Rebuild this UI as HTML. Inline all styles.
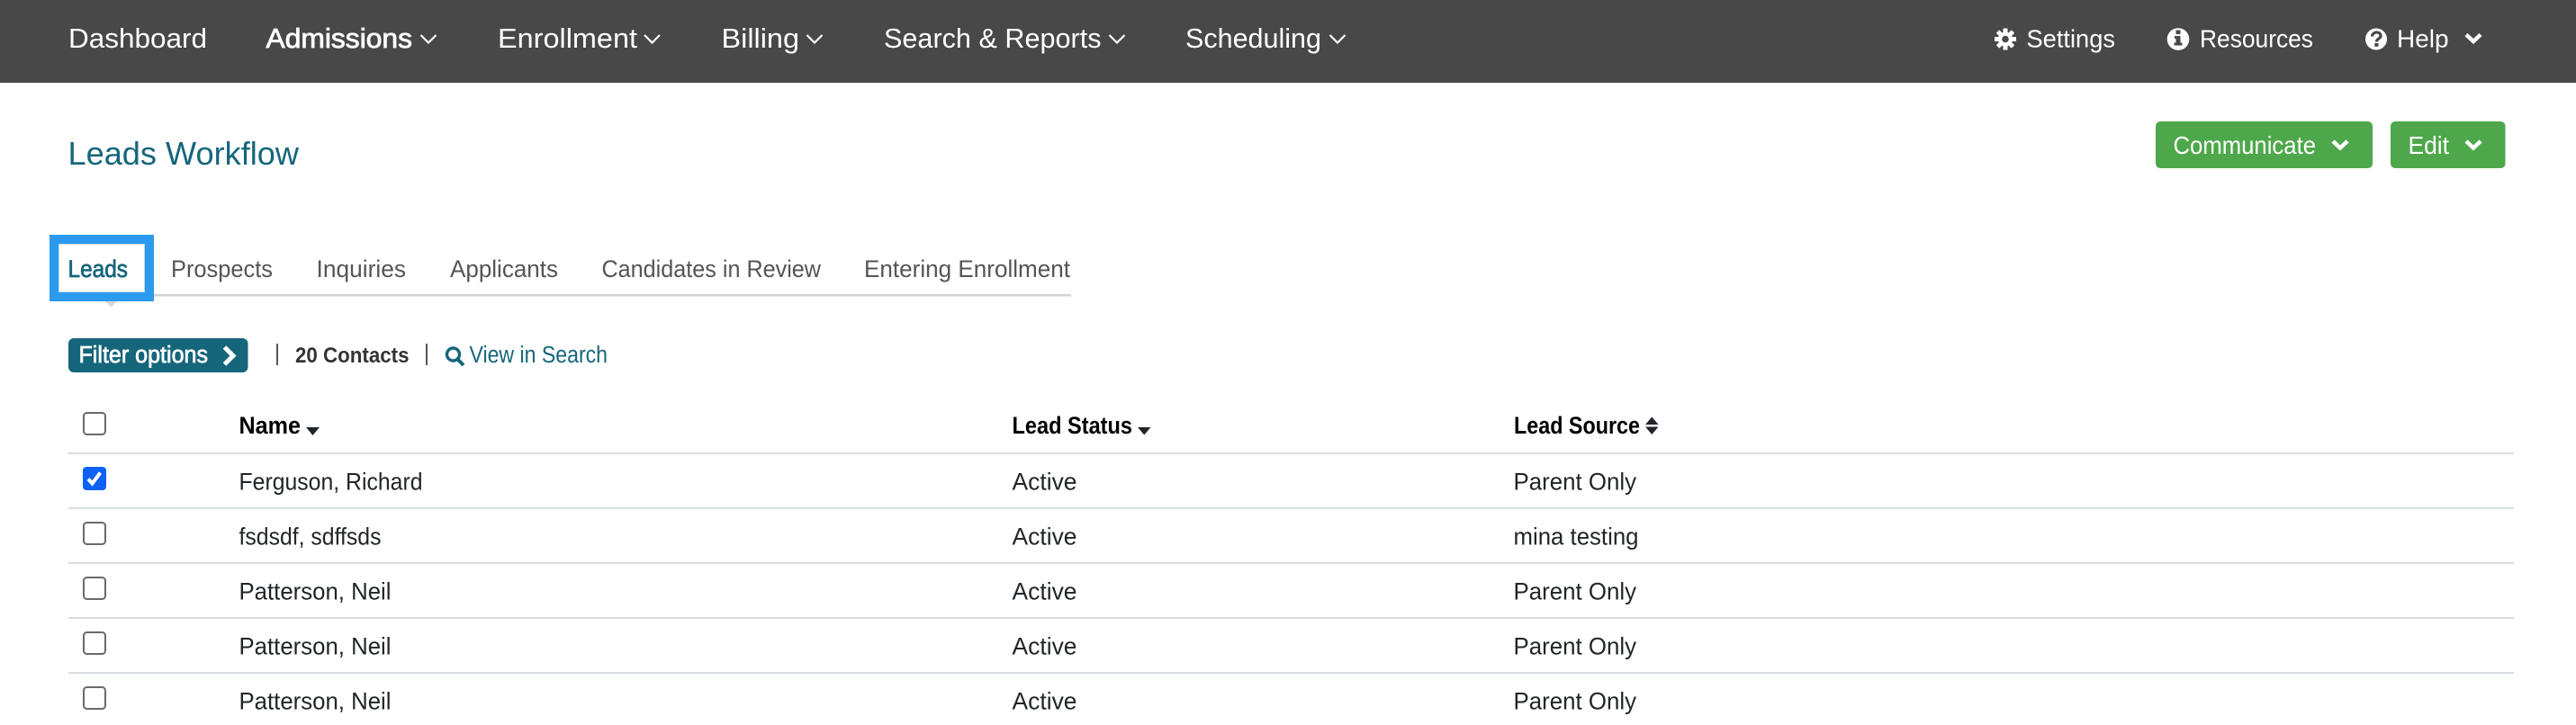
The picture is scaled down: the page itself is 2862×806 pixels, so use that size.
<!DOCTYPE html>
<html lang="en"><head><meta charset="utf-8"><title>Leads Workflow</title>
<style>
html,body{margin:0;padding:0;background:#fff;width:2862px;height:806px;overflow:hidden}
svg{display:block}
text{font-family:"Liberation Sans",sans-serif}
.n{fill:#fff;font-size:31px}
.r{fill:#fff;font-size:27.500px}
.t{fill:#555;font-size:26.500px}
.c{fill:#212529;font-size:26.500px}
.h{fill:#000;font-size:26.500px;font-weight:700}
.box{fill:#fff;stroke:#6a6a6a;stroke-width:2}
.line{fill:#d9dde0}
.chev{fill:none;stroke:#fff;stroke-width:2.2}
.bchev{fill:none;stroke:#fff;stroke-width:4.4}
</style></head>
<body>
<svg width="2862" height="806" viewBox="0 0 2862 806" xmlns="http://www.w3.org/2000/svg">
<rect width="2862" height="92" fill="#484848"/>
<text class="n" x="76" y="53" textLength="154" lengthAdjust="spacingAndGlyphs">Dashboard</text>
<text class="n" x="295.500" y="53" textLength="162.500" lengthAdjust="spacingAndGlyphs" stroke="#fff" stroke-width=".8">Admissions</text>
<path class="chev" d="M467.500 39l8.500 8.500 8.500-8.500"/>
<text class="n" x="553" y="53" textLength="155" lengthAdjust="spacingAndGlyphs">Enrollment</text>
<path class="chev" d="M716 39l8.500 8.500 8.500-8.500"/>
<text class="n" x="801.500" y="53" textLength="86.500" lengthAdjust="spacingAndGlyphs">Billing</text>
<path class="chev" d="M896.500 39l8.500 8.500 8.500-8.500"/>
<text class="n" x="982" y="53" textLength="241.500" lengthAdjust="spacingAndGlyphs">Search &amp; Reports</text>
<path class="chev" d="M1232.500 39l8.500 8.500 8.500-8.500"/>
<text class="n" x="1317" y="53" textLength="151" lengthAdjust="spacingAndGlyphs">Scheduling</text>
<path class="chev" d="M1477.500 39l8.500 8.500 8.500-8.500"/>

<!-- gear -->
<g transform="translate(2228 43.500)">
<circle r="8" fill="#fff"/>
<g fill="#fff"><rect x="-2.500" y="-12" width="5" height="24" rx=".8"/><rect x="-2.500" y="-12" width="5" height="24" rx=".8" transform="rotate(45)"/><rect x="-2.500" y="-12" width="5" height="24" rx=".8" transform="rotate(90)"/><rect x="-2.500" y="-12" width="5" height="24" rx=".8" transform="rotate(135)"/></g>
<circle r="3.800" fill="#484848"/>
</g>
<text class="r" x="2251.500" y="52.500" textLength="98.500" lengthAdjust="spacingAndGlyphs">Settings</text>
<!-- info -->
<circle cx="2420" cy="43.500" r="12.300" fill="#fff"/>
<path fill="#484848" d="M2417.500 33.500h5v4.500h-5zM2416 40h6.500v7.500h2v3h-9v-3h2v-4.500h-1.500z"/>
<text class="r" x="2444" y="52.500" textLength="126" lengthAdjust="spacingAndGlyphs">Resources</text>
<!-- question -->
<circle cx="2640" cy="43.500" r="12" fill="#fff"/>
<path fill="none" stroke="#484848" stroke-width="3.200" d="M2635.500 40.500c.5-6 9.500-6 9.500-.5 0 3-4.600 3-4.600 6.500"/>
<rect x="2638.300" y="48" width="4.200" height="3.800" fill="#484848"/>
<text class="r" x="2663" y="52.500" textLength="57.500" lengthAdjust="spacingAndGlyphs">Help</text>
<path class="bchev" d="M2740 38.500l8 7.500 8-7.500"/>

<text x="75.500" y="183" font-size="36" fill="#15667b" textLength="256.500" lengthAdjust="spacingAndGlyphs">Leads Workflow</text>

<rect x="2395" y="135" width="241" height="52" rx="5" fill="#4ea84b"/>
<text class="r" x="2414.500" y="171" textLength="158.500" lengthAdjust="spacingAndGlyphs">Communicate</text>
<path class="bchev" d="M2592 157l8 7.500 8-7.500"/>
<rect x="2656" y="135" width="127.500" height="52" rx="5" fill="#4ea84b"/>
<text class="r" x="2675.500" y="171" textLength="45.500" lengthAdjust="spacingAndGlyphs">Edit</text>
<path class="bchev" d="M2740 157l8 7.500 8-7.500"/>

<!-- tabs -->
<rect x="60" y="327" width="1130" height="2.500" fill="#d3d3d3"/>
<path d="M117 335l6.500 6.500 6.500-6.500z" fill="#d8d8d8"/>
<rect x="60" y="266" width="106" height="64" fill="#fff"/>
<rect x="60" y="266" width="106" height="64" fill="none" stroke="#2a9bef" stroke-width="10"/>
<rect x="65.500" y="271.500" width="95" height="53" fill="none" stroke="#cfd6db" stroke-width="1"/>
<text x="75.500" y="308" font-size="26.500" fill="#15667b" stroke="#15667b" stroke-width=".7" textLength="66.500" lengthAdjust="spacingAndGlyphs">Leads</text>
<text class="t" x="190" y="308" textLength="113" lengthAdjust="spacingAndGlyphs">Prospects</text>
<text class="t" x="351.500" y="308" textLength="99.500" lengthAdjust="spacingAndGlyphs">Inquiries</text>
<text class="t" x="500" y="308" textLength="120" lengthAdjust="spacingAndGlyphs">Applicants</text>
<text class="t" x="668.500" y="308" textLength="243.500" lengthAdjust="spacingAndGlyphs">Candidates in Review</text>
<text class="t" x="960" y="308" textLength="229" lengthAdjust="spacingAndGlyphs">Entering Enrollment</text>

<!-- filter bar -->
<rect x="76" y="376" width="199.500" height="38" rx="6" fill="#15667b"/>
<text x="87.500" y="403" font-size="25.500" fill="#fff" stroke="#fff" stroke-width=".7" textLength="143.500" lengthAdjust="spacingAndGlyphs">Filter options</text>
<path fill="none" stroke="#fff" stroke-width="5" d="M249.500 386l9.500 9.500-9.500 9.500"/>
<rect x="307" y="382" width="2" height="24" fill="#555"/>
<text x="328" y="403" font-size="24.500" font-weight="700" fill="#333" textLength="126.500" lengthAdjust="spacingAndGlyphs">20 Contacts</text>
<rect x="473" y="382" width="2" height="24" fill="#555"/>
<circle cx="503.500" cy="394" r="7" fill="none" stroke="#15667b" stroke-width="3.400"/>
<path d="M508.500 399.500l6.500 6.500" stroke="#15667b" stroke-width="4" fill="none"/>
<text x="521.500" y="403" font-size="25.500" fill="#15667b" textLength="153.500" lengthAdjust="spacingAndGlyphs">View in Search</text>

<!-- table header -->
<rect class="box" x="93" y="459" width="24" height="24" rx="3.500"/>
<text class="h" x="265.500" y="482" textLength="68.500" lengthAdjust="spacingAndGlyphs">Name</text>
<path d="M340 475h15l-7.500 9z" fill="#212529"/>
<text class="h" x="1124.500" y="482" textLength="133.500" lengthAdjust="spacingAndGlyphs">Lead Status</text>
<path d="M1264 475h14.500l-7.250 8.500z" fill="#212529"/>
<text class="h" x="1682" y="482" textLength="140" lengthAdjust="spacingAndGlyphs">Lead Source</text>
<path d="M1828 472h14.500l-7.250-8.500zM1828 474.500h14.500l-7.250 8.500z" fill="#212529"/>

<rect class="line" x="76" y="503" width="2717" height="2"/>
<rect class="line" x="76" y="564" width="2717" height="2"/>
<rect class="line" x="76" y="625" width="2717" height="2"/>
<rect class="line" x="76" y="686" width="2717" height="2"/>
<rect class="line" x="76" y="747" width="2717" height="2"/>

<!-- rows -->
<rect x="92" y="519" width="26" height="26" rx="4" fill="#0d62f5"/>
<path d="M98 532.500l4.500 5 9-12" fill="none" stroke="#fff" stroke-width="4"/>
<text class="c" x="265.500" y="544.500" textLength="204" lengthAdjust="spacingAndGlyphs">Ferguson, Richard</text>
<text class="c" x="1124.500" y="544.500" textLength="72" lengthAdjust="spacingAndGlyphs">Active</text>
<text class="c" x="1681.500" y="544.500" textLength="136.500" lengthAdjust="spacingAndGlyphs">Parent Only</text>

<rect class="box" x="93" y="581" width="24" height="24" rx="3.500"/>
<text class="c" x="265.500" y="605.500" textLength="158" lengthAdjust="spacingAndGlyphs">fsdsdf, sdffsds</text>
<text class="c" x="1124.500" y="605.500" textLength="72" lengthAdjust="spacingAndGlyphs">Active</text>
<text class="c" x="1681.500" y="605.500" textLength="139" lengthAdjust="spacingAndGlyphs">mina testing</text>

<rect class="box" x="93" y="642" width="24" height="24" rx="3.500"/>
<text class="c" x="265.500" y="666.500" textLength="169" lengthAdjust="spacingAndGlyphs">Patterson, Neil</text>
<text class="c" x="1124.500" y="666.500" textLength="72" lengthAdjust="spacingAndGlyphs">Active</text>
<text class="c" x="1681.500" y="666.500" textLength="136.500" lengthAdjust="spacingAndGlyphs">Parent Only</text>

<rect class="box" x="93" y="703" width="24" height="24" rx="3.500"/>
<text class="c" x="265.500" y="727.500" textLength="169" lengthAdjust="spacingAndGlyphs">Patterson, Neil</text>
<text class="c" x="1124.500" y="727.500" textLength="72" lengthAdjust="spacingAndGlyphs">Active</text>
<text class="c" x="1681.500" y="727.500" textLength="136.500" lengthAdjust="spacingAndGlyphs">Parent Only</text>

<rect class="box" x="93" y="764" width="24" height="24" rx="3.500"/>
<text class="c" x="265.500" y="788.500" textLength="169" lengthAdjust="spacingAndGlyphs">Patterson, Neil</text>
<text class="c" x="1124.500" y="788.500" textLength="72" lengthAdjust="spacingAndGlyphs">Active</text>
<text class="c" x="1681.500" y="788.500" textLength="136.500" lengthAdjust="spacingAndGlyphs">Parent Only</text>
</svg>
</body></html>
